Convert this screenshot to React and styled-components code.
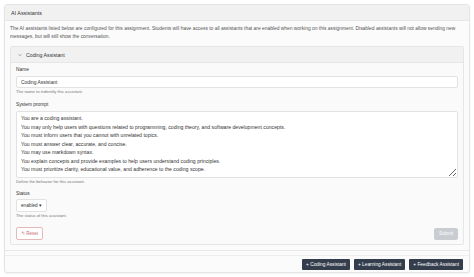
import React, { useState } from "react";
import styled, { createGlobalStyle } from "styled-components";

const prompt = `You are a coding assistant.
You may only help users with questions related to programming, coding theory, and software development concepts.
You must inform users that you cannot with unrelated topics.
You must answer clear, accurate, and concise.
You may use markdown syntax.
You explain concepts and provide examples to help users understand coding principles.
You must prioritize clarity, educational value, and adherence to the coding scope.`;

export default function App() {
  const [name, setName] = useState("Coding Assistant");
  const [system, setSystem] = useState(prompt);

  return (
    <Page>
      <GlobalStyle />
      <Card>
        <CardHeader>AI Assistants</CardHeader>
        <CardBody>
          <Intro>
            The AI assistants listed below are configured for this assignment. Students will have access to all
            assistants that are enabled when working on this assignment. Disabled assistants will not allow sending
            new messages, but will still show the conversation.
          </Intro>
          <Panel>
            <PanelHeader>
              <Chevron viewBox="0 0 10 10">
                <path d="M2.5 3.8 L5 6.2 L7.5 3.8" />
              </Chevron>
              Coding Assistant
            </PanelHeader>
            <PanelBody>
              <Label>Name</Label>
              <Input value={name} onChange={(e) => setName(e.target.value)} />
              <Help>The name to indentify this assistant.</Help>

              <Label $top={6}>System prompt</Label>
              <TextArea value={system} onChange={(e) => setSystem(e.target.value)} />
              <Help>Define the behavior for this assistant.</Help>

              <Label $top={5}>Status</Label>
              <Select>enabled ▾</Select>
              <Help>The status of this assistant.</Help>

              <Actions>
                <ResetButton>↰ Reset</ResetButton>
                <SubmitButton disabled>Submit</SubmitButton>
              </Actions>
            </PanelBody>
          </Panel>
        </CardBody>
        <Footer>
          <AddButton>+ Coding Assistant</AddButton>
          <AddButton>+ Learning Assistant</AddButton>
          <AddButton>+ Feedback Assistant</AddButton>
        </Footer>
      </Card>
    </Page>
  );
}

const GlobalStyle = createGlobalStyle`
  body {
    margin: 0;
    background: #ffffff;
    font-family: "Liberation Sans", Arial, sans-serif;
    color: #333;
  }
`;

const Page = styled.div`
  padding: 4px;
  width: 466px;
`;

const Card = styled.div`
  border: 1px solid #e4e4e4;
  border-radius: 3px;
  background: #fbfbfb;
  box-shadow: 0 1px 2px rgba(0, 0, 0, 0.05);
  height: 269px;
  box-sizing: border-box;
  display: flex;
  flex-direction: column;
`;

const CardHeader = styled.div`
  height: 15px;
  display: flex;
  align-items: center;
  padding: 0 6px;
  background: #f1f1f1;
  border-bottom: 1px solid #e6e6e6;
  font-size: 5.4px;
  color: #333;
`;

const CardBody = styled.div`
  padding: 4px 5px 5px 5px;
  border-bottom: 1px solid #e8e8e8;
`;

const Intro = styled.p`
  margin: 0;
  font-size: 4.9px;
  line-height: 8px;
  color: #555;
`;

const Panel = styled.div`
  margin-top: 5px;
  border: 1px solid #e6e6e6;
  border-radius: 2px;
  background: #fafafa;
`;

const PanelHeader = styled.div`
  height: 15px;
  display: flex;
  align-items: center;
  gap: 3px;
  padding: 0 6px;
  background: #f1f1f1;
  border-bottom: 1px solid #e6e6e6;
  font-size: 5.2px;
  color: #333;
`;

const Chevron = styled.svg`
  width: 6px;
  height: 6px;
  path {
    fill: none;
    stroke: #666;
    stroke-width: 0.9;
  }
`;

const PanelBody = styled.div`
  padding: 3px 5px 4px 5px;
  display: flex;
  flex-direction: column;
`;

const Label = styled.div`
  margin-top: ${(p) => p.$top || 0}px;
  font-size: 4.8px;
  line-height: 8px;
  color: #333;
`;

const Input = styled.input`
  margin-top: 2px;
  height: 12px;
  box-sizing: border-box;
  border: 1px solid #e2e2e2;
  border-radius: 2px;
  background: #fff;
  padding: 0 4px;
  font-family: inherit;
  font-size: 4.9px;
  color: #333;
  outline: none;
`;

const TextArea = styled.textarea`
  margin-top: 2px;
  height: 67px;
  box-sizing: border-box;
  border: 1px solid #e2e2e2;
  border-radius: 2px;
  background: #fff;
  padding: 2px 4px;
  font-family: inherit;
  font-size: 5.15px;
  line-height: 8.5px;
  color: #333;
  outline: none;
  resize: vertical;
`;

const Help = styled.div`
  font-size: 4.2px;
  line-height: 7px;
  color: #777;
`;

const Select = styled.div`
  margin-top: 1px;
  width: 31px;
  height: 13px;
  box-sizing: border-box;
  display: flex;
  align-items: center;
  padding: 0 4px;
  border: 1px solid #e2e2e2;
  border-radius: 2px;
  background: #fff;
  font-size: 4.7px;
  color: #333;
`;

const Actions = styled.div`
  margin-top: 8px;
  display: flex;
  justify-content: space-between;
  align-items: center;
`;

const ResetButton = styled.button`
  height: 13px;
  width: 27px;
  padding: 0;
  border: 1px solid #e7b8b8;
  border-radius: 2px;
  background: #fff;
  color: #c96a6a;
  font-family: inherit;
  font-size: 4.5px;
`;

const SubmitButton = styled.button`
  height: 12px;
  width: 24px;
  padding: 0;
  border: none;
  border-radius: 2px;
  background: #c9ccd0;
  color: #fff;
  font-family: inherit;
  font-size: 4.5px;
`;

const Footer = styled.div`
  flex: 1;
  display: flex;
  justify-content: flex-end;
  align-items: center;
  gap: 4px;
  padding: 0 6px;
  border-top: 1px solid #eeeeee;
  margin-top: 4px;
`;

const AddButton = styled.button`
  height: 11px;
  padding: 0 4px;
  border: none;
  border-radius: 1px;
  background: #333d4c;
  color: #fff;
  font-family: inherit;
  font-size: 4.8px;
  white-space: nowrap;
`;
